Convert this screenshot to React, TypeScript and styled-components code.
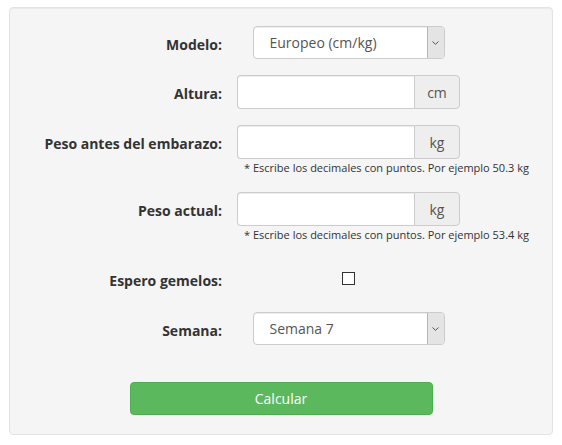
import React from "react";
import styled, { createGlobalStyle } from "styled-components";

const Global = createGlobalStyle`
  html, body { margin: 0; padding: 0; background: #fff; }
  body { font-family: "Open Sans", "Liberation Sans", Arial, sans-serif; color: #333; }
  * { box-sizing: border-box; }
`;

const Page = styled.div`
  padding: 7px 9px;
`;

const Well = styled.form`
  width: 544px;
  background: #f5f5f5;
  border: 1px solid #e3e3e3;
  border-radius: 4px;
  box-shadow: inset 0 1px 1px rgba(0, 0, 0, 0.05);
  padding: 18px 19px 19px;
  display: flex;
  flex-direction: column;
`;

const Row = styled.div<{ $mt: number }>`
  display: grid;
  grid-template-columns: 193px 223px 73px;
  column-gap: 15px;
  margin-top: ${(p) => p.$mt}px;
`;

const Label = styled.label<{ $h?: number }>`
  grid-column: 1;
  text-align: right;
  font-weight: 700;
  font-size: 14px;
  color: #333;
  height: ${(p) => p.$h ?? 33}px;
  line-height: ${(p) => p.$h ?? 33}px;
  padding-top: 2px;
`;

const Field = styled.div<{ $center?: boolean }>`
  grid-column: 2;
  display: flex;
  justify-content: ${(p) => (p.$center ? "center" : "stretch")};
  align-items: center;
`;

const SelectBox = styled.div`
  width: 192px;
  height: 33px;
  display: flex;
  background: #fff;
  border: 1px solid #ccc;
  border-radius: 4px;
  box-shadow: inset 0 1px 1px rgba(0, 0, 0, 0.075);
  overflow: hidden;
`;

const SelectText = styled.div`
  flex: 1;
  padding-left: 16px;
  font-size: 14px;
  line-height: 31px;
  color: #555;
`;

const SelectArrow = styled.div`
  width: 17px;
  background: #e4e4e4;
  border-left: 1px solid #b5b5b5;
  display: flex;
  align-items: center;
  justify-content: center;
`;

const InputGroup = styled.div`
  display: flex;
  width: 223px;
  height: 34px;
`;

const TextInput = styled.input`
  flex: 1;
  min-width: 0;
  height: 100%;
  border: 1px solid #ccc;
  border-right: none;
  border-radius: 4px 0 0 4px;
  background: #fff;
  box-shadow: inset 0 1px 1px rgba(0, 0, 0, 0.075);
  padding: 6px 12px;
  font-size: 14px;
  outline: none;
`;

const Addon = styled.span`
  width: 46px;
  height: 100%;
  background: #eee;
  border: 1px solid #ccc;
  border-radius: 0 4px 4px 0;
  color: #555;
  font-size: 14px;
  display: flex;
  align-items: center;
  justify-content: center;
`;

const Help = styled.div`
  grid-column: 2 / span 2;
  text-align: center;
  font-size: 11px;
  line-height: 15px;
  margin-top: 1px;
  padding-right: 12px;
  color: #333;
`;

const Check = styled.span`
  width: 13px;
  height: 13px;
  border: 1px solid #333;
  background: #fff;
  display: block;
`;

const ButtonRow = styled.div`
  display: flex;
  justify-content: center;
  margin-top: 37px;
`;

const Button = styled.button`
  width: 303px;
  height: 33px;
  background: #5cb85c;
  border: 1px solid #4cae4c;
  border-radius: 4px;
  color: #fff;
  font-family: inherit;
  font-size: 14px;
  padding: 0;
`;

const Chevron = () => (
  <svg width="9" height="6" viewBox="0 0 9 6">
    <path d="M1.5 1.5 L4.5 4.3 L7.5 1.5" fill="none" stroke="#555" strokeWidth="1" />
  </svg>
);

const Select = ({ value }: { value: string }) => (
  <SelectBox>
    <SelectText>{value}</SelectText>
    <SelectArrow>
      <Chevron />
    </SelectArrow>
  </SelectBox>
);

const UnitInput = ({ unit }: { unit: string }) => (
  <InputGroup>
    <TextInput type="text" />
    <Addon>{unit}</Addon>
  </InputGroup>
);

export default function App() {
  return (
    <Page>
      <Global />
      <Well>
        <Row $mt={0}>
          <Label>Modelo:</Label>
          <Field $center>
            <Select value="Europeo (cm/kg)" />
          </Field>
        </Row>
        <Row $mt={16}>
          <Label>Altura:</Label>
          <Field>
            <UnitInput unit="cm" />
          </Field>
        </Row>
        <Row $mt={16}>
          <Label>Peso antes del embarazo:</Label>
          <Field>
            <UnitInput unit="kg" />
          </Field>
          <Help>* Escribe los decimales con puntos. Por ejemplo 50.3 kg</Help>
        </Row>
        <Row $mt={17}>
          <Label>Peso actual:</Label>
          <Field>
            <UnitInput unit="kg" />
          </Field>
          <Help>* Escribe los decimales con puntos. Por ejemplo 53.4 kg</Help>
        </Row>
        <Row $mt={20}>
          <Label>Espero gemelos:</Label>
          <Field $center>
            <Check />
          </Field>
        </Row>
        <Row $mt={17}>
          <Label>Semana:</Label>
          <Field $center>
            <Select value="Semana 7" />
          </Field>
        </Row>
        <ButtonRow>
          <Button type="button">Calcular</Button>
        </ButtonRow>
      </Well>
    </Page>
  );
}
